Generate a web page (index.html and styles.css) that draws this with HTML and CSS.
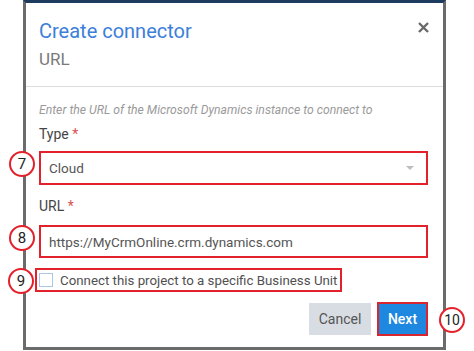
FILE: index.html
```html
<!DOCTYPE html>
<html lang="en">
<head>
    <meta charset="UTF-8">
    <title>Create connector</title>
    <link rel="stylesheet" href="styles.css">
</head>
<body>
    <div class="frame">
        <div class="modal-header">
            <div class="titles">
                <h2 class="title">Create connector</h2>
                <div class="subtitle">URL</div>
            </div>
            <button class="close" aria-label="Close">
                <svg width="11" height="11" viewBox="0 0 11 11"><path d="M1 1L10 10M10 1L1 10" stroke="#6a6a6a" stroke-width="2.4"/></svg>
            </button>
        </div>
        <div class="modal-body">
            <p class="hint">Enter the URL of the Microsoft Dynamics instance to connect to</p>
            <label class="field-label">Type <span class="req">*</span></label>
            <div class="field marked select">
                <span>Cloud</span>
                <span class="caret"></span>
            </div>
            <label class="field-label url-label">URL <span class="req">*</span></label>
            <div class="field marked">
                <span>https://MyCrmOnline.crm.dynamics.com</span>
            </div>
            <div class="check-row marked">
                <span class="checkbox"></span>
                <span>Connect this project to a specific Business Unit</span>
            </div>
            <div class="actions">
                <button class="btn-cancel">Cancel</button>
                <button class="btn-next">Next</button>
            </div>
        </div>
    </div>
    <span class="step s7">7</span>
    <span class="step s8">8</span>
    <span class="step s9">9</span>
    <span class="step s10">10</span>
</body>
</html>
```
FILE: styles.css
```css
body {
    margin: 0;
    background: #ffffff;
    font-family: Roboto, "Liberation Sans", sans-serif;
    color: #444;
    position: relative;
    height: 351px;
    overflow: hidden;
}
.frame {
    margin-left: 23px;
    width: 417px;
    height: 344px;
    border: 3px solid #6b6b6b;
    border-top: 3px solid #1d3b5e;
    background: #fff;
}
.modal-header {
    display: flex;
    justify-content: space-between;
    padding: 15px 13px 0 13px;
    height: 68px;
    border-bottom: 1px solid #dcdcdc;
}
.title {
    margin: 0;
    font-size: 20px;
    font-weight: 400;
    line-height: 26px;
    color: #3c7fd9;
}
.subtitle {
    margin-top: 4px;
    font-size: 17px;
    line-height: 22px;
    color: #7a7a7a;
}
.close {
    border: none;
    background: none;
    padding: 0;
    width: 11px;
    height: 11px;
    margin-top: 4px;
    margin-right: 1px;
}
.close svg {
    display: block;
}
.modal-body {
    padding: 15px 15px 0 13px;
}
.hint {
    margin: 0;
    font-size: 12.2px;
    line-height: 16px;
    font-style: italic;
    color: #9a9a9a;
}
.field-label {
    display: block;
    margin-top: 7px;
    font-size: 14px;
    line-height: 18px;
    color: #454545;
}
.url-label {
    margin-top: 12px;
}
.req {
    color: #d9534f;
}
.marked {
    border: 2px solid #e3212b;
}
.field {
    margin-top: 8px;
    height: 30px;
    display: flex;
    align-items: center;
    justify-content: space-between;
    padding: 0 12px 0 8px;
    font-size: 13.5px;
    color: #555;
}
.url-label + .field {
    margin-top: 10px;
    height: 29px;
}
.caret {
    width: 0;
    height: 0;
    border-left: 4px solid transparent;
    border-right: 4px solid transparent;
    border-top: 4px solid #bdbdbd;
}
.check-row {
    display: inline-flex;
    align-items: center;
    gap: 7px;
    margin: 10px 0 0 -4px;
    height: 20px;
    padding: 0 3px 0 2px;
    font-size: 13.3px;
    color: #505050;
}
.checkbox {
    width: 12px;
    height: 12px;
    border: 1px solid #a9c7e6;
    background: #fff;
}
.actions {
    display: flex;
    justify-content: flex-end;
    gap: 6px;
    margin-top: 10px;
}
.btn-cancel, .btn-next {
    font-family: Roboto, "Liberation Sans", sans-serif;
    font-size: 14px;
    cursor: pointer;
}
.btn-cancel {
    margin-top: 1px;
    height: 32px;
    width: 62px;
    border: none;
    background: #d7dde3;
    color: #555;
}
.btn-next {
    height: 34px;
    width: 51px;
    border: 2px solid #d7262f;
    background: #1e87e0;
    color: #fff;
    font-weight: 500;
}
.step {
    position: absolute;
    width: 22px;
    height: 22px;
    border: 2px solid #e3212b;
    border-radius: 50%;
    background: #fff;
    color: #222;
    font-size: 15px;
    line-height: 22px;
    text-align: center;
}
.s7 { left: 9px; top: 151px; }
.s8 { left: 9px; top: 225px; }
.s9 { left: 8px; top: 268px; }
.s10 { left: 439px; top: 307px; font-size: 14px; }
```
